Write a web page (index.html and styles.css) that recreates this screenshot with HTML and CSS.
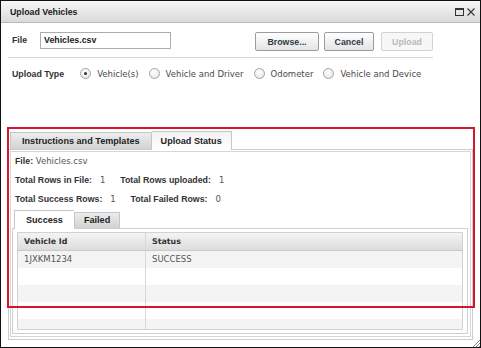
FILE: index.html
```html
<!DOCTYPE html>
<html lang="en">

<head>
    <meta charset="UTF-8">
    <meta name="viewport" content="width=device-width, initial-scale=1.0">
    <title>Upload Vehicles</title>
    <link rel="stylesheet" href="styles.css">
</head>

<body>
    <div class="window">
        <div class="titlebar">
            <span class="title">Upload Vehicles</span>
            <span class="controls">
                <svg width="9" height="8" viewBox="0 0 9 8">
                    <rect x="0.5" y="0.5" width="8" height="7" fill="none" stroke="#333" stroke-width="1" />
                    <rect x="0" y="0" width="9" height="2" fill="#333" />
                </svg>
                <svg width="8" height="8" viewBox="0 0 8 8">
                    <path d="M0.5 0.5 L7.5 7.5 M7.5 0.5 L0.5 7.5" stroke="#333" stroke-width="1.1" fill="none" />
                </svg>
            </span>
        </div>

        <div class="content">
            <div class="upload-form">
                <div class="file-row">
                    <span class="label file-label">File</span>
                    <div class="file-input">Vehicles.csv</div>
                    <button class="btn btn-browse">Browse...</button>
                    <button class="btn btn-cancel">Cancel</button>
                    <button class="btn btn-upload" disabled>Upload</button>
                </div>

                <div class="type-row">
                    <span class="label type-label">Upload Type</span>
                    <span class="radio checked"></span><span class="radio-text">Vehicle(s)</span>
                    <span class="radio"></span><span class="radio-text">Vehicle and Driver</span>
                    <span class="radio"></span><span class="radio-text">Odometer</span>
                    <span class="radio"></span><span class="radio-text">Vehicle and Device</span>
                </div>
            </div>

            <div class="tabs">
                <div class="tab-strip">
                    <div class="tab">Instructions and Templates</div>
                    <div class="tab active">Upload Status</div>
                </div>
                <div class="tab-panel">
                    <div class="panel-inner">
                        <div class="info-line"><span class="label">File:</span> <span class="value">Vehicles.csv</span></div>
                        <div class="info-line">
                            <span class="label">Total Rows in File:</span><span class="value num">1</span>
                            <span class="label next">Total Rows uploaded:</span><span class="value num">1</span>
                        </div>
                        <div class="info-line">
                            <span class="label">Total Success Rows:</span><span class="value num">1</span>
                            <span class="label next">Total Failed Rows:</span><span class="value num">0</span>
                        </div>

                        <div class="sub-tabs">
                            <div class="sub-strip">
                                <div class="sub-tab active">Success</div>
                                <div class="sub-tab">Failed</div>
                            </div>
                            <div class="sub-panel">
                                <div class="grid">
                                    <div class="grid-head">
                                        <div class="cell col-id">Vehicle Id</div>
                                        <div class="cell col-status">Status</div>
                                    </div>
                                    <div class="grid-row alt">
                                        <div class="cell col-id">1JXKM1234</div>
                                        <div class="cell col-status">SUCCESS</div>
                                    </div>
                                    <div class="grid-row">
                                        <div class="cell col-id"></div>
                                        <div class="cell col-status"></div>
                                    </div>
                                    <div class="grid-row alt">
                                        <div class="cell col-id"></div>
                                        <div class="cell col-status"></div>
                                    </div>
                                    <div class="grid-row">
                                        <div class="cell col-id"></div>
                                        <div class="cell col-status"></div>
                                    </div>
                                    <div class="grid-row alt">
                                        <div class="cell col-id"></div>
                                        <div class="cell col-status"></div>
                                    </div>
                                </div>
                            </div>
                        </div>
                    </div>
                </div>
            </div>
        </div>

        <!-- annotation box drawn over the status area -->
        <div class="highlight"></div>

        <svg class="grip" width="8" height="8" viewBox="0 0 8 8">
            <path d="M8 1 L1 8 M8 4 L4 8 M8 7 L7 8" stroke="#888" stroke-width="1" fill="none" />
        </svg>
    </div>
</body>

</html>
```

FILE: styles.css
```css
* {
    box-sizing: border-box;
}

body {
    margin: 0;
    padding: 0;
    background-color: #fff;
    font-family: "DejaVu Sans", Verdana, sans-serif;
    font-size: 8.5px;
    color: #4a4a4a;
}

.window {
    position: relative;
    width: 481px;
    height: 348px;
    border: 1px solid #111;
    background: #fff;
    overflow: hidden;
}

.titlebar {
    display: flex;
    align-items: center;
    justify-content: space-between;
    height: 22px;
    padding: 0 5px 0 9px;
    border-bottom: 1px solid #b9b9b9;
    background: linear-gradient(#f6f6f6, #dadada);
}

.title {
    font-family: "Liberation Sans", Arial, sans-serif;
    font-weight: bold;
    font-size: 8.8px;
    color: #222;
}

.controls {
    display: flex;
    gap: 3px;
    align-items: center;
    padding-top: 1px;
}

.controls svg {
    display: block;
}

.label {
    font-family: "Liberation Sans", Arial, sans-serif;
    font-weight: bold;
    font-size: 8.8px;
    color: #333;
}

.content {
    padding: 9px 0 0 7px;
}

/* top form */

.upload-form {
    width: 425px;
}

.file-row {
    display: flex;
    align-items: flex-start;
    height: 19px;
    border-bottom: 1px solid #d6d6d6;
    box-sizing: content-box;
    padding-bottom: 6px;
}

.file-label {
    width: 32px;
    padding-left: 4px;
    line-height: 17px;
}

.file-input {
    width: 131px;
    height: 17px;
    border: 1px solid #a8adb2;
    padding-left: 3px;
    line-height: 15px;
    font-family: "Liberation Sans", Arial, sans-serif;
    font-weight: bold;
    font-size: 8.8px;
    color: #222;
}

.btn {
    height: 19px;
    padding: 0;
    border: 1px solid #9c9c9c;
    border-radius: 2px;
    background: linear-gradient(#ffffff, #e4e4e4);
    font-family: "Liberation Sans", Arial, sans-serif;
    font-weight: bold;
    font-size: 8.8px;
    color: #2e3b44;
}

.btn-browse {
    width: 64px;
    margin-left: auto;
}

.btn-cancel {
    width: 50px;
    margin-left: 5px;
}

.btn-upload {
    width: 52px;
    margin-left: 7px;
}

.btn:disabled {
    border-color: #d2d2d2;
    background: #f7f7f7;
    color: #b9b9b9;
}

.type-row {
    display: flex;
    align-items: center;
    height: 13px;
    margin-top: 9px;
    padding-left: 4px;
}

.type-label {
    margin-right: 16px;
}

.radio {
    position: relative;
    width: 11px;
    height: 11px;
    border: 1px solid #a3a3a3;
    border-radius: 50%;
    background: radial-gradient(circle at 40% 35%, #ffffff, #e2e2e2);
    margin-right: 6px;
}

.radio.checked::after {
    content: "";
    position: absolute;
    left: 3px;
    top: 3px;
    width: 3px;
    height: 3px;
    border-radius: 50%;
    background: #333;
}

.radio-text {
    margin-right: 10px;
    color: #4a4a4a;
}

/* tabs */

.tabs {
    margin-top: 51px;
    width: 465px;
}

.tab-strip {
    display: flex;
    align-items: flex-end;
    height: 18px;
    padding-left: 2px;
}

.tab {
    height: 17px;
    padding: 0 11px;
    border: 1px solid #c6c6c6;
    border-bottom: none;
    background: linear-gradient(#ededed, #d2d2d2);
    font-family: "Liberation Sans", Arial, sans-serif;
    font-weight: bold;
    font-size: 9.1px;
    line-height: 16px;
    color: #222;
}

.tab.active {
    height: 19px;
    margin-bottom: -1px;
    padding: 0 9px;
    border-left: none;
    background: linear-gradient(#f3f3f3, #ffffff);
    position: relative;
    line-height: 18px;
}

.tab-panel {
    height: 191px;
    border: 1px solid #cdcdcd;
    padding: 1px 1px 2px 1px;
}

.panel-inner {
    height: 100%;
    border: 1px solid #d6d6d6;
}

.info-line {
    height: 19px;
    line-height: 19px;
    padding-left: 4px;
    white-space: nowrap;
}

.value {
    color: #555;
}

.num {
    margin-left: 8px;
}

.next {
    margin-left: 12px;
}

.sub-tabs {
    margin: 1px 2px 0 1px;
}

.sub-strip {
    display: flex;
    align-items: flex-end;
    height: 18px;
    padding-left: 2px;
}

.sub-tab {
    height: 16px;
    padding: 0 9px;
    border: 1px solid #c6c6c6;
    border-bottom: none;
    background: linear-gradient(#ececec, #d2d2d2);
    font-family: "Liberation Sans", Arial, sans-serif;
    font-weight: bold;
    font-size: 9.1px;
    line-height: 14px;
    color: #222;
}

.sub-tab.active {
    height: 19px;
    margin-bottom: -1px;
    padding: 0 11px;
    border-right: none;
    background: #fff;
    position: relative;
    line-height: 19px;
}

.sub-panel {
    height: 106px;
    border: 1px solid #cfcfcf;
    padding: 3px 4px 3px 4px;
}

.grid {
    height: 98px;
    border: 1px solid #d2d2d2;
    overflow: hidden;
}

.grid-head,
.grid-row {
    display: flex;
    height: 17px;
}

.grid-head {
    height: 18px;
    border-bottom: 1px solid #c9c9c9;
    background: linear-gradient(#f4f4f4, #dcdcdc);
}

.grid-row.alt {
    background: #f4f4f4;
}

.cell {
    padding-left: 6px;
    line-height: 17px;
    white-space: nowrap;
}

.col-id {
    width: 128px;
    border-right: 1px solid #d8d8d8;
}

.col-status {
    flex: 1;
}

.grid-head .cell {
    font-family: "DejaVu Sans", Verdana, sans-serif;
    font-weight: bold;
    font-size: 7.9px;
    color: #333;
}

.grid-row .cell {
    color: #555;
}

.highlight {
    position: absolute;
    left: 6px;
    top: 126px;
    width: 468px;
    height: 181px;
    border: 2px solid #d2162b;
    pointer-events: none;
}

.grip {
    position: absolute;
    right: 0;
    bottom: 0;
}
```
